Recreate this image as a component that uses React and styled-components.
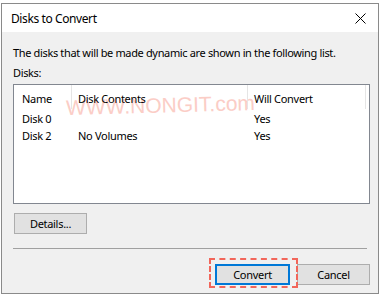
import React from "react";
import styled, { createGlobalStyle } from "styled-components";

const Global = createGlobalStyle`
  html, body { margin: 0; padding: 0; background: #ffffff; }
  body { font-family: "Noto Sans", "Segoe UI", sans-serif; font-size: 11px; color: #000; }
  * { box-sizing: border-box; }
`;

const Page = styled.div`
  width: 382px;
  height: 297px;
  padding: 3px 0 0 1px;
  overflow: hidden;
`;

const Dialog = styled.div`
  width: 378px;
  height: 291px;
  border: 1px solid #8a8a8a;
  background: #f0f0f0;
  display: flex;
  flex-direction: column;
`;

const TitleBar = styled.div`
  height: 28px;
  background: #ffffff;
  display: flex;
  align-items: center;
  justify-content: space-between;
  padding: 0 6px 0 9px;
`;

const Title = styled.span`
  font-size: 12px;
  letter-spacing: -0.4px;
  color: #000;
`;

const CloseIcon = styled.svg`
  width: 11px;
  height: 11px;
  margin-right: 6px;
  margin-top: 1px;
`;

const Body = styled.div`
  padding: 13px 8px 0 11px;
  display: flex;
  flex-direction: column;
`;

const Text = styled.div`
  line-height: 16px;
  height: 16px;
  font-size: 11px;
  letter-spacing: -0.35px;
  margin-top: ${(p) => p.$mt || 0}px;
  white-space: nowrap;
`;

const ListBox = styled.div`
  position: relative;
  margin-top: 3px;
  height: 120px;
  background: #ffffff;
  border: 1px solid #828790;
`;

const HeaderRow = styled.div`
  display: flex;
  height: 25px;
`;

const HeaderCell = styled.div`
  position: relative;
  z-index: 1;
  width: ${(p) => p.$w}px;
  padding-left: ${(p) => p.$pl}px;
  padding-top: 6px;
  height: 24px;
  line-height: 16px;
  border-right: 1px solid #e5e5e5;
  letter-spacing: -0.3px;
  white-space: nowrap;
`;

const Row = styled.div`
  position: relative;
  z-index: 1;
  display: flex;
  height: 17px;
  line-height: 17px;
`;

const Cell = styled.div`
  width: ${(p) => p.$w}px;
  padding-left: ${(p) => p.$pl}px;
  letter-spacing: -0.3px;
  white-space: nowrap;
`;

const Watermark = styled.div`
  position: absolute;
  left: 52px;
  top: 11px;
  font-family: "Liberation Sans", Arial, sans-serif;
  font-size: 21px;
  color: #fbcdc6;
  white-space: nowrap;
  pointer-events: none;
  transform: rotate(-1.5deg);
  transform-origin: left center;
`;

const Button = styled.button`
  font-family: inherit;
  font-size: 11px;
  letter-spacing: -0.3px;
  color: #000;
  background: #e1e1e1;
  border: ${(p) => (p.$default ? "2px solid #0078d7" : "1px solid #adadad")};
  width: ${(p) => p.$w}px;
  height: 21px;
  padding: 0;
  margin: 0;
  line-height: 16px;
`;

const DetailsWrap = styled.div`
  margin: 9px 0 0 1px;
`;

const Separator = styled.div`
  height: 1px;
  background: #a0a0a0;
  margin: 14px 3px 0 0;
`;

const Footer = styled.div`
  display: flex;
  justify-content: flex-end;
  gap: 7px;
  margin-top: 15px;
`;

const Highlight = styled.div`
  position: relative;
  display: flex;
`;

const DashedBox = styled.div`
  position: absolute;
  left: -6px;
  top: -6px;
  right: -8px;
  bottom: -3px;
  border: 2px dashed #f2665a;
  pointer-events: none;
`;

const cols = [
  { w: 58, pl: 8 },
  { w: 176, pl: 6 },
  { w: 118, pl: 6 },
];

const rows = [
  ["Disk 0", "", "Yes"],
  ["Disk 2", "No Volumes", "Yes"],
];

export default function App() {
  return (
    <>
      <Global />
      <Page>
        <Dialog>
          <TitleBar>
            <Title>Disks to Convert</Title>
            <CloseIcon viewBox="0 0 11 11">
              <path d="M0.5 0.5 L10.5 10.5 M10.5 0.5 L0.5 10.5" stroke="#000" strokeWidth="1" fill="none" />
            </CloseIcon>
          </TitleBar>
          <Body>
            <Text>The disks that will be made dynamic are shown in the following list.</Text>
            <Text $mt={4}>Disks:</Text>
            <ListBox>
              <Watermark>WWW.NONGIT.com</Watermark>
              <HeaderRow>
                <HeaderCell $w={cols[0].w} $pl={cols[0].pl}>Name</HeaderCell>
                <HeaderCell $w={cols[1].w} $pl={cols[1].pl}>Disk Contents</HeaderCell>
                <HeaderCell $w={cols[2].w} $pl={cols[2].pl}>Will Convert</HeaderCell>
              </HeaderRow>
              {rows.map((r, i) => (
                <Row key={i}>
                  {r.map((c, j) => (
                    <Cell key={j} $w={cols[j].w} $pl={cols[j].pl}>{c}</Cell>
                  ))}
                </Row>
              ))}
            </ListBox>
            <DetailsWrap>
              <Button $w={73}>Details...</Button>
            </DetailsWrap>
            <Separator />
            <Footer>
              <Highlight>
                <Button $w={75} $default>Convert</Button>
                <DashedBox />
              </Highlight>
              <Button $w={73}>Cancel</Button>
            </Footer>
          </Body>
        </Dialog>
      </Page>
    </>
  );
}
